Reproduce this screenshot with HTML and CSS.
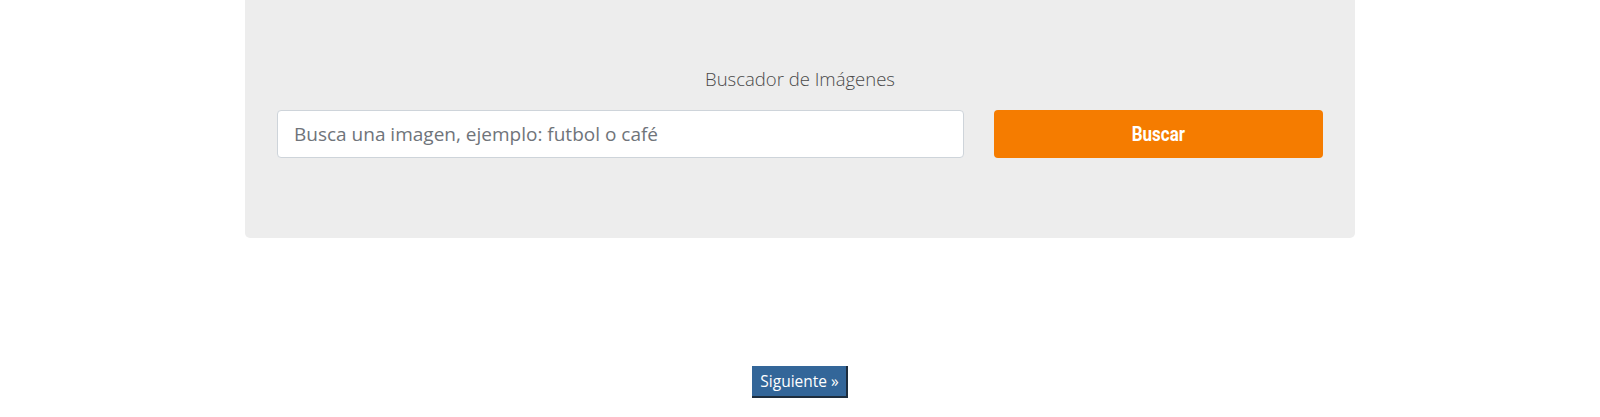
FILE: index.html
```html
<!DOCTYPE html>
<html lang="es">
<head>
<meta charset="utf-8">
<title>Buscador de Imágenes</title>
<link rel="stylesheet" href="styles.css">
</head>
<body>
<div class="container">
  <div class="jumbotron">
    <p class="lead">Buscador de Imágenes</p>
    <form class="row">
      <div class="col col-8">
        <input class="form-control" type="text" placeholder="Busca una imagen, ejemplo: futbol o café">
      </div>
      <div class="col col-4">
        <button type="button" class="btn-search"><span class="btn-label">Buscar</span></button>
      </div>
    </form>
  </div>
  <div class="pager">
    <button type="button" class="btn-next">Siguiente »</button>
  </div>
</div>
</body>
</html>
```

FILE: styles.css
```css
* { box-sizing: border-box; }
html, body { margin: 0; padding: 0; background: #fff; }
body {
  font-family: "Open Sans", "Noto Sans", sans-serif;
  color: #212529;
}
.container {
  width: 1140px;
  margin: 0 auto;
  padding: 0 15px;
}
.jumbotron {
  background: #ededed;
  border-radius: 0 0 5px 5px;
  padding: 64px 32px;
}
.lead {
  margin: 0 0 16px;
  text-align: center;
  font-size: 18.5px;
  line-height: 30px;
  font-weight: 300;
  color: #4a4a4a;
}
.row {
  display: flex;
  margin: 0 -15px 16px;
}
.col { padding: 0 15px; }
.col-8 { flex: 0 0 66.6667%; }
.col-4 { flex: 0 0 33.3333%; }
.form-control {
  display: block;
  width: 100%;
  height: 48px;
  padding: 0 16px;
  font-family: "Open Sans", "Noto Sans", sans-serif;
  font-size: 19px;
  color: #495057;
  background: #fff;
  border: 1px solid #ced4da;
  border-radius: 4px;
  outline: none;
}
.form-control::placeholder { color: #6f747a; opacity: 1; }
.btn-search {
  display: flex;
  align-items: center;
  justify-content: center;
  width: 100%;
  height: 48px;
  border: 0;
  border-radius: 4px;
  background: #f57c00;
  color: #fff;
  font-family: "Roboto", sans-serif;
  font-weight: 700;
  font-size: 20px;
  padding: 0;
}
.btn-label {
  display: inline-block;
  transform: scaleX(0.85);
}
.pager {
  display: flex;
  justify-content: center;
  padding-top: 128px;
}
.btn-next {
  background: #336699;
  color: #fff;
  border: 0;
  border-right: 2px solid #1d2d3d;
  border-bottom: 2px solid #1d2d3d;
  padding: 4px 7px 4px 8px;
  font-family: "Open Sans", "Noto Sans", sans-serif;
  font-size: 15.5px;
  line-height: 22px;
}
```
